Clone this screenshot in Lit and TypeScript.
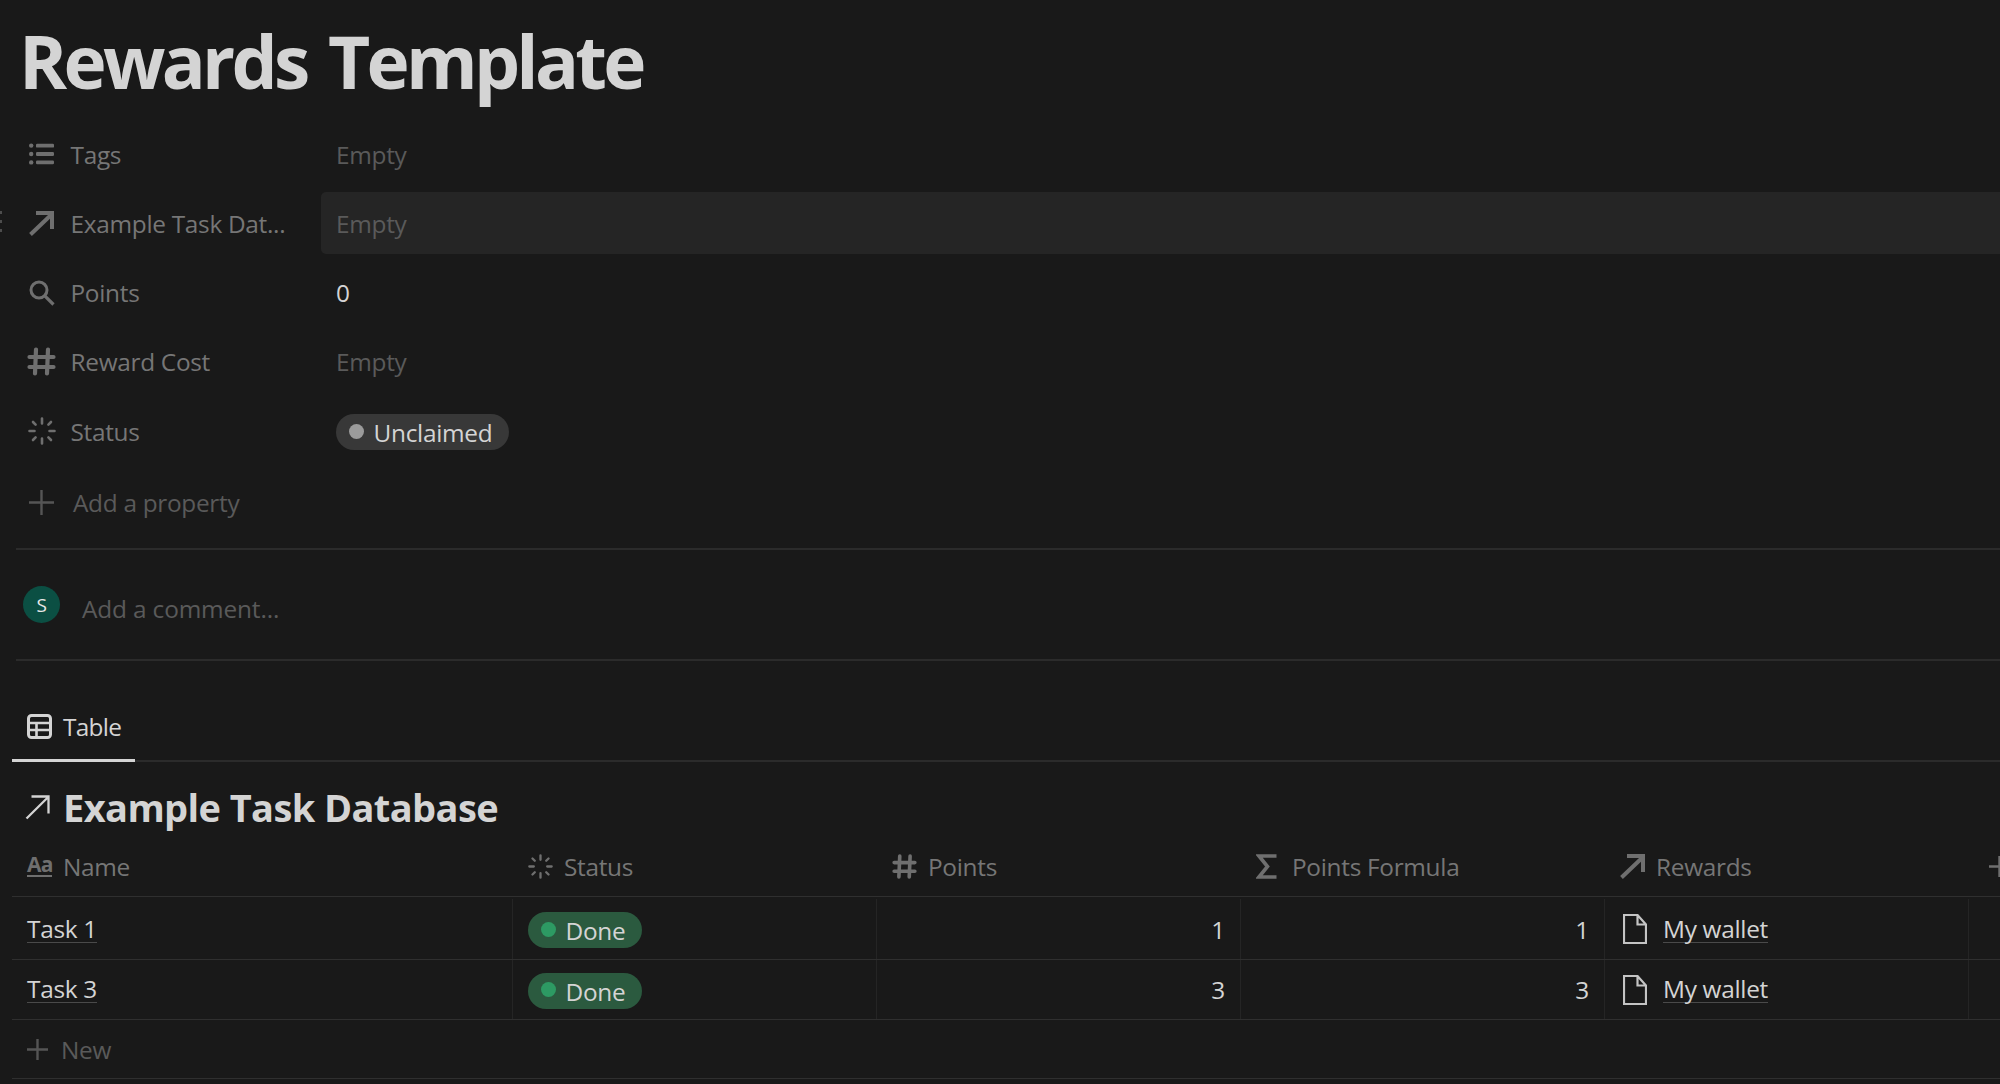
import {css, html, LitElement, svg} from 'lit';
import type {HTMLTemplateResult, SVGTemplateResult} from 'lit';
import {customElement} from 'lit/decorators.js';

const icon = (
  w: number,
  h: number,
  cls: string,
  body: SVGTemplateResult,
): HTMLTemplateResult =>
  html`<svg class="icon ${cls}" width=${w} height=${h} viewBox="0 0 ${w} ${h}" fill="none">${body}</svg>`;

const listIcon = () =>
  icon(25, 22, 'muted', svg`
    <g fill="currentColor">
      <circle cx="2.2" cy="2.6" r="2.2" /><circle cx="2.2" cy="11" r="2.2" /><circle cx="2.2" cy="19.4" r="2.2" />
      <rect x="7" y="0.8" width="18" height="3.8" rx="1.2" />
      <rect x="7" y="9.1" width="18" height="3.8" rx="1.2" />
      <rect x="7" y="17.4" width="18" height="3.8" rx="1.2" />
    </g>`);

const arrowIcon = () =>
  icon(25, 25, 'muted', svg`
    <path d="M1.5 23.5 L22.5 3.5 M7 2 H23 V18" stroke="currentColor" stroke-width="4" />`);

const thinArrowIcon = () =>
  icon(25, 25, '', svg`
    <path d="M1.5 23.5 L23 2.2 M6.5 1.5 H23.5 V18.5" stroke="currentColor" stroke-width="2.3" />`);

const searchIcon = () =>
  icon(26, 26, 'muted', svg`
    <circle cx="10" cy="10" r="8" stroke="currentColor" stroke-width="3" />
    <path d="M15.8 15.8 L24.5 24.5" stroke="currentColor" stroke-width="3.2" />`);

const hashIcon = (s: number) =>
  icon(s, s, 'muted', svg`
    <g transform="scale(${s / 29})" stroke="currentColor" stroke-width="4.2" stroke-linecap="round">
      <path d="M9 2.5 L8 26.5 M21 2.5 L20 26.5 M2.5 10 H26.5 M2.5 20 H26.5" />
    </g>`);

const spinnerIcon = (s: number) =>
  icon(s, s, 'muted', svg`
    <g transform="scale(${s / 28})" stroke="currentColor" stroke-width="2.6" stroke-linecap="round">
      <path d="M14 1.5 V6.5 M14 21.5 V26.5 M1.5 14 H6.5 M21.5 14 H26.5 M5 5 L7.6 7.6 M23 5 L20.4 7.6 M5 23 L7.6 20.4 M23 23 L20.4 20.4" />
    </g>`);

const plusIcon = (s: number, cls = 'faint') =>
  icon(s, s, cls, svg`
    <path d="M${s / 2} 0 V${s} M0 ${s / 2} H${s}" stroke="currentColor" stroke-width="2.4" />`);

const tableIcon = () =>
  icon(25, 25, '', svg`
    <rect x="1.5" y="1.5" width="22" height="22" rx="3" stroke="currentColor" stroke-width="3" />
    <path d="M1.5 9 H23.5 M1.5 16 H23.5 M9.5 9 V23.5" stroke="currentColor" stroke-width="2.6" />`);

const sigmaIcon = () =>
  icon(21, 25, 'muted', svg`
    <path d="M20.5 2 H3 L11.5 12.5 L3 23 H20.5" stroke="currentColor" stroke-width="3.6" />`);

const pageIcon = () =>
  icon(24, 30, 'page', svg`
    <path d="M1 1 H14.5 L23 10.5 V29 H1 Z M14.5 1 V10.5 H23" stroke="currentColor" stroke-width="2.2" />`);

type Prop = {
  label: string;
  icon: () => HTMLTemplateResult;
  value: HTMLTemplateResult;
  hover?: boolean;
};

const empty = html`<span class="empty">Empty</span>`;

const pill = (text: string, cls: string) =>
  html`<span class="pill ${cls}"><span class="dot"></span><span class="pill-text">${text}</span></span>`;

const PROPS: Prop[] = [
  {label: 'Tags', icon: listIcon, value: empty},
  {label: 'Example Task Dat...', icon: arrowIcon, value: empty, hover: true},
  {label: 'Points', icon: searchIcon, value: html`<span>0</span>`},
  {label: 'Reward Cost', icon: () => hashIcon(29), value: empty},
  {label: 'Status', icon: () => spinnerIcon(28), value: pill('Unclaimed', 'gray')},
];

const ROWS = [
  {name: 'Task 1', n: 1, h: 63},
  {name: 'Task 3', n: 3, h: 60},
];

@customElement('app-root')
export class AppRoot extends LitElement {
  static styles = css`
    :host {
      display: block;
      width: 2000px;
      height: 1084px;
      overflow: hidden;
      background: #191919;
      color: #d4d4d4;
      font-family: 'Open Sans', 'Liberation Sans', sans-serif;
      font-size: 24.4px;
      letter-spacing: -0.3px;
    }

    .icon {
      display: block;
      flex: none;
    }

    .muted {
      color: #6f6f6f;
    }

    .faint {
      color: #555;
    }

    .page {
      color: #c4c4c4;
    }

    h1 {
      margin: 0;
      padding-left: 19px;
      height: 123px;
      line-height: 122px;
      font-size: 73px;
      font-weight: 700;
      letter-spacing: -3.7px;
      word-spacing: 6px;
      white-space: nowrap;
    }

    .props {
      display: flex;
      flex-direction: column;
      gap: 7.33px;
      margin-right: -20px;
    }

    .prop {
      position: relative;
      display: grid;
      grid-template-columns: 321px 1fr;
      height: 62px;
    }

    .prop-label {
      display: flex;
      align-items: center;
      color: #767676;
    }

    .prop-icon {
      width: 29px;
      margin: 0 14.5px 0 27px;
      display: flex;
      justify-content: center;
      flex: none;
    }

    .prop-value {
      display: flex;
      align-items: center;
      padding-left: 15px;
      border-radius: 5px;
    }

    .prop.hover .prop-value {
      background: #252525;
    }

    .handle {
      position: absolute;
      left: 0;
      top: 19px;
      width: 2px;
      height: 22px;
      background: repeating-linear-gradient(#4d4d4d 0 3px, transparent 3px 9px);
    }

    .empty {
      color: #5a5a5a;
    }

    .pill {
      display: inline-flex;
      align-items: center;
      height: 36px;
      margin-top: 2px;
      border-radius: 18px;
      padding: 0 17px 0 13px;
      gap: 9.5px;
    }

    .pill-text {
      padding-top: 1px;
    }

    .pill.gray {
      background: #383838;
    }

    .pill.gray .dot {
      background: #9b9b9b;
    }

    .pill.green {
      background: #2b5a3f;
    }

    .pill.green .dot {
      background: #2d9a63;
    }

    .dot {
      width: 15px;
      height: 15px;
      border-radius: 50%;
      margin-top: -2px;
    }

    .add {
      display: flex;
      align-items: center;
      height: 62px;
      margin-top: 9.2px;
      padding-left: 29px;
      gap: 19px;
      color: #5a5a5a;
    }

    .rule {
      height: 2px;
      margin-left: 16px;
      background: #2b2b2b;
    }

    .add + .rule {
      margin-top: 14.5px;
    }

    .comment {
      display: flex;
      align-items: center;
      height: 109px;
      padding-left: 23px;
      gap: 22px;
      color: #5a5a5a;
    }

    .comment-text {
      padding-top: 8px;
      letter-spacing: -0.15px;
    }

    .avatar {
      width: 37px;
      height: 37px;
      border-radius: 50%;
      background: #0b4f43;
      color: #e8e8e8;
      font-size: 19px;
      display: flex;
      align-items: center;
      justify-content: center;
    }

    .tabs {
      display: flex;
      align-items: flex-end;
      height: 99px;
      margin-left: 12px;
      border-bottom: 2px solid #2b2b2b;
    }

    .tab {
      display: flex;
      align-items: center;
      gap: 11px;
      width: 123px;
      height: 54px;
      box-sizing: border-box;
      padding: 0 0 14px 15px;
      margin-bottom: -2px;
      border-bottom: 3px solid #d4d4d4;
      letter-spacing: -0.7px;
    }

    .db-title {
      display: flex;
      align-items: center;
      gap: 13px;
      height: 77px;
      padding: 13px 0 0 25px;
      box-sizing: border-box;
      font-size: 38px;
      font-weight: 700;
      letter-spacing: -0.6px;
    }

    .table {
      margin-left: 12px;
      width: 2100px;
    }

    .grid {
      display: grid;
      grid-template-columns: 501px repeat(4, 364px) 1fr;
    }

    .head {
      height: 58px;
      box-sizing: border-box;
      padding-bottom: 2px;
      border-bottom: 1px solid #2f2f2f;
      color: #767676;
    }

    .th {
      display: flex;
      align-items: center;
      gap: 11px;
      padding-left: 15px;
    }

    .th.sigma {
      gap: 15px;
    }

    .th.more {
      padding-left: 20px;
    }

    .aa {
      display: block;
      width: 25px;
      height: 20px;
      box-sizing: border-box;
      border-bottom: 2.5px solid #6f6f6f;
      color: #6f6f6f;
      font-size: 21px;
      font-weight: 700;
      line-height: 15px;
      letter-spacing: -0.8px;
      flex: none;
    }

    .row {
      box-sizing: border-box;
      border-bottom: 1px solid #2f2f2f;
    }

    .row.first .td {
      margin-top: 2px;
    }

    .td {
      display: flex;
      align-items: center;
      padding: 0 15px 0 15px;
      border-right: 1px solid #252525;
    }

    .td.num {
      justify-content: flex-end;
    }

    .td.rel {
      padding-left: 18px;
      gap: 16px;
    }

    .link {
      line-height: 26px;
      border-bottom: 1px solid #4a4a4a;
    }

    .new {
      display: flex;
      align-items: center;
      height: 59px;
      box-sizing: border-box;
      padding-left: 15px;
      gap: 13px;
      color: #5a5a5a;
      border-bottom: 1px solid #2f2f2f;
    }
  `;

  render(): HTMLTemplateResult {
    return html`
      <h1>Rewards Template</h1>
      <div class="props">
        ${PROPS.map(
          (p) => html`<div class="prop ${p.hover ? 'hover' : ''}">
            ${p.hover ? html`<span class="handle"></span>` : ''}
            <div class="prop-label">
              <span class="prop-icon">${p.icon()}</span>${p.label}
            </div>
            <div class="prop-value">${p.value}</div>
          </div>`,
        )}
      </div>
      <div class="add">${plusIcon(25)}<span>Add a property</span></div>
      <div class="rule"></div>
      <div class="comment">
        <span class="avatar">S</span><span class="comment-text">Add a comment...</span>
      </div>
      <div class="rule"></div>
      <div class="tabs">
        <div class="tab">${tableIcon()}<span>Table</span></div>
      </div>
      <div class="db-title">${thinArrowIcon()}<span>Example Task Database</span></div>
      <div class="table">
        <div class="grid head">
          <div class="th"><span class="aa">Aa</span>Name</div>
          <div class="th">${spinnerIcon(25)}Status</div>
          <div class="th">${hashIcon(25)}Points</div>
          <div class="th sigma">${sigmaIcon()}Points Formula</div>
          <div class="th">${arrowIcon()}Rewards</div>
          <div class="th more">${plusIcon(21, 'muted')}</div>
        </div>
        ${ROWS.map(
          (r, i) => html`<div
            class="grid row ${i === 0 ? 'first' : ''}"
            style="height: ${r.h}px"
          >
            <div class="td"><span class="link">${r.name}</span></div>
            <div class="td">${pill('Done', 'green')}</div>
            <div class="td num">${r.n}</div>
            <div class="td num">${r.n}</div>
            <div class="td rel">${pageIcon()}<span class="link">My wallet</span></div>
          </div>`,
        )}
        <div class="new">${plusIcon(21)}<span>New</span></div>
      </div>
    `;
  }
}

declare global {
  interface HTMLElementTagNameMap {
    'app-root': AppRoot;
  }
}
